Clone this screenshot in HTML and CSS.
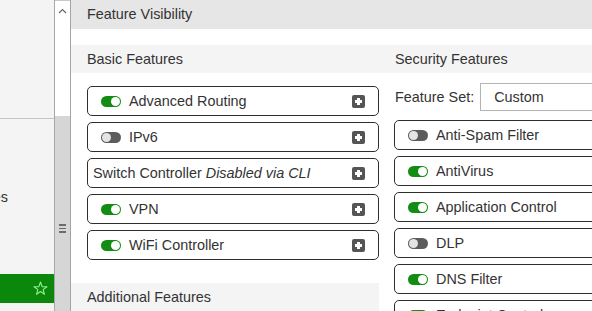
FILE: index.html
```html
<!DOCTYPE html>
<html lang="en">
<head>
    <meta charset="UTF-8">
    <title>Feature Visibility</title>
    <link rel="stylesheet" href="styles.css">
</head>
<body>
    <div class="app">
        <aside class="sidebar">
            <div class="side-top"></div>
            <div class="side-item">Replacement Messages</div>
            <div class="side-item active">
                <svg class="star" width="15" height="15" viewBox="0 0 15 15">
                    <path d="M7.5 1 L9.1 5.6 L14 5.7 L10.1 8.6 L11.5 13.3 L7.5 10.5 L3.5 13.3 L4.9 8.6 L1 5.7 L5.9 5.6 Z" fill="none" stroke="#8ff08f" stroke-width="1.1" stroke-linejoin="round"/>
                </svg>
            </div>
        </aside>
        <div class="gutter">
            <div class="gutter-top">
                <svg width="9" height="6" viewBox="0 0 9 6"><path d="M1 5 L4.5 1.5 L8 5" fill="none" stroke="#666" stroke-width="1.2"/></svg>
            </div>
            <div class="gutter-handle">
                <span></span><span></span><span></span>
            </div>
        </div>
        <main class="main">
            <div class="page-title">Feature Visibility</div>
            <div class="columns">
                <section class="col col-left">
                    <div class="col-head">Basic Features</div>
                    <div class="feature-list">
                        <div class="feature"><span class="toggle on"></span><span class="label">Advanced Routing</span><span class="plus"></span></div>
                        <div class="feature"><span class="toggle"></span><span class="label">IPv6</span><span class="plus"></span></div>
                        <div class="feature plain"><span class="label">Switch Controller <em>Disabled via CLI</em></span><span class="plus"></span></div>
                        <div class="feature"><span class="toggle on"></span><span class="label">VPN</span><span class="plus"></span></div>
                        <div class="feature"><span class="toggle on"></span><span class="label">WiFi Controller</span><span class="plus"></span></div>
                    </div>
                    <div class="col-head extra">Additional Features</div>
                </section>
                <section class="col col-right">
                    <div class="col-head">Security Features</div>
                    <div class="feature-set">
                        <span>Feature Set:</span>
                        <div class="select">Custom</div>
                    </div>
                    <div class="feature-list">
                        <div class="feature"><span class="toggle"></span><span class="label">Anti-Spam Filter</span></div>
                        <div class="feature"><span class="toggle on"></span><span class="label">AntiVirus</span></div>
                        <div class="feature"><span class="toggle on"></span><span class="label">Application Control</span></div>
                        <div class="feature"><span class="toggle"></span><span class="label">DLP</span></div>
                        <div class="feature"><span class="toggle on"></span><span class="label">DNS Filter</span></div>
                        <div class="feature"><span class="toggle on"></span><span class="label">Endpoint Control</span></div>
                    </div>
                </section>
            </div>
        </main>
    </div>
</body>
</html>
```

FILE: styles.css
```css
html, body {
    margin: 0;
    height: 100%;
    overflow: hidden;
}
body {
    font-family: 'Liberation Sans', Arial, sans-serif;
    font-size: 14.4px;
    color: #333333;
    background-color: #ffffff;
}
.app {
    display: flex;
    height: 311px;
}
.sidebar {
    width: 54px;
    flex: none;
    background-color: #f4f4f4;
    border-right: 1px solid #a8a8a8;
    display: flex;
    flex-direction: column;
    overflow: hidden;
}
.side-top {
    height: 118px;
    border-bottom: 1px solid #c4c4c4;
}
.side-item {
    height: 28px;
    line-height: 28px;
    margin-top: 64px;
    display: flex;
    justify-content: flex-end;
    white-space: nowrap;
    padding-right: 46px;
    overflow: hidden;
}
.side-item.active {
    margin-top: 63px;
    height: 29px;
    padding-right: 6px;
    align-items: center;
    background-color: #0b870b;
}
.gutter {
    width: 15px;
    flex: none;
    background-color: #d6d6d6;
    border-right: 1px solid #a4a4a4;
    display: flex;
    flex-direction: column;
}
.gutter-top {
    height: 116px;
    background-color: #ffffff;
    border-top: 1px solid #c8c8c8;
    display: flex;
    justify-content: center;
    padding-top: 7px;
    box-sizing: border-box;
}
.gutter-handle {
    margin-top: 108px;
    display: flex;
    flex-direction: column;
    align-items: center;
    gap: 2px;
}
.gutter-handle span {
    width: 7px;
    height: 1.5px;
    background-color: #6c6c6c;
}
.main {
    flex: 1;
    min-width: 0;
    overflow: hidden;
}
.page-title {
    height: 29px;
    line-height: 29px;
    padding-left: 16px;
    background-color: #e6e6e6;
}
.columns {
    display: flex;
    margin-top: 16px;
}
.col-left {
    width: 308px;
    flex: none;
}
.col-right {
    width: 330px;
    flex: none;
}
.col-head {
    height: 28px;
    line-height: 28px;
    padding-left: 16px;
    background-color: #f4f4f4;
}
.col-head.extra {
    margin-top: 23px;
}
.feature-list {
    display: flex;
    flex-direction: column;
    gap: 6px;
    padding-left: 16px;
    margin-top: 13px;
}
.col-right .feature-list {
    padding-left: 15px;
    margin-top: 9px;
}
.feature {
    height: 28px;
    border: 1px solid #2e2e2e;
    border-radius: 5px;
    display: flex;
    align-items: center;
    padding: 0 13px;
    gap: 8px;
}
.feature.plain {
    padding-left: 5px;
}
.feature .label {
    flex: 1;
    white-space: nowrap;
}
.toggle {
    position: relative;
    width: 20px;
    height: 11px;
    border-radius: 6px;
    background-color: #5c5c5c;
    flex: none;
}
.toggle::after {
    content: '';
    position: absolute;
    top: 1px;
    left: 1px;
    width: 9px;
    height: 9px;
    border-radius: 50%;
    background-color: #e4e4e4;
}
.toggle.on {
    background-color: #138c13;
}
.toggle.on::after {
    left: 10px;
    background-color: #ffffff;
}
.plus {
    position: relative;
    width: 13px;
    height: 13px;
    border-radius: 2px;
    background-color: #555555;
    flex: none;
}
.plus::before,
.plus::after {
    content: '';
    position: absolute;
    background-color: #ffffff;
}
.plus::before {
    left: 3px;
    top: 5px;
    width: 7px;
    height: 3px;
}
.plus::after {
    left: 5px;
    top: 3px;
    width: 3px;
    height: 7px;
}
.feature-set {
    display: flex;
    align-items: center;
    gap: 6px;
    padding-left: 16px;
    margin-top: 10px;
}
.select {
    height: 26px;
    line-height: 26px;
    width: 200px;
    border: 1px solid #b4b4b4;
    padding-left: 13px;
}
```
